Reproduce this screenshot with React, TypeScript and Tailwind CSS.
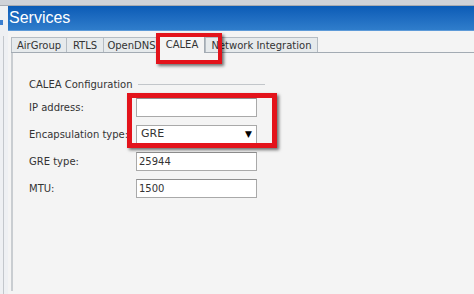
import { type ReactNode } from "react";

const TABS = [
  { label: "AirGroup", w: "w-[56px]" },
  { label: "RTLS", w: "w-[38px]" },
  { label: "OpenDNS", w: "w-[57px]" },
  { label: "CALEA", w: "w-[46px]" },
  { label: "Network Integration", w: "w-[113px]" },
];

export default function App() {
  return (
    <div className="relative flex h-[294px] w-[474px] flex-col overflow-hidden bg-[#e9ecef] font-['DejaVu_Sans',sans-serif] text-[10px] text-[#333]">
      {/* window chrome strip */}
      <div className="h-[6px] shrink-0 border-b border-[#a7abb2] bg-[#cfd2d8]" />

      <div className="flex min-h-0 flex-1">
        {/* left rail */}
        <div className="relative w-[8px] shrink-0 bg-[#eef0f3]">
          <div className="mt-[14px] h-[5px] w-[3px] bg-[#3b7fd0]" />
          <div className="absolute bottom-0 left-[3px] top-[30px] w-px bg-[#c3c7cc]" />
        </div>

        <div className="flex min-w-0 flex-1 flex-col">
          <header className="flex h-[25px] shrink-0 items-center border-b border-[#5d9ad8] bg-gradient-to-b from-[#0a5bb6] to-[#2f7dcb] pl-[1px]">
            <h1 className="font-['Liberation_Sans',Arial,sans-serif] text-[16px] leading-none text-white">
              Services
            </h1>
          </header>

          <div className="flex min-h-0 flex-1 flex-col bg-[#f4f4f4] pb-[3px] pl-[3px] pt-[6px]">
            {/* tab strip */}
            <div className="flex h-[16px] shrink-0 items-end border-b border-[#a3abb3]">
              {TABS.map((t) => {
                const active = t.label === "CALEA";
                return (
                  <div
                    key={t.label}
                    className={[
                      t.w,
                      "flex shrink-0 items-center justify-center whitespace-nowrap border border-b-0",
                      active
                        ? "-mb-px h-[18px] border-[#a3abb3] bg-[#f4f4f4]"
                        : "-mr-px h-[15px] border-[#b5bcc3] bg-[#e6eaec]",
                    ].join(" ")}
                  >
                    {t.label}
                  </div>
                );
              })}
            </div>

            {/* tab body */}
            <div className="flex-1 border-l-2 border-[#c9cdd1] pl-[16px] pt-[24px]">
              <div className="w-[236px]">
                <div className="flex items-center gap-[5px]">
                  <span>CALEA Configuration</span>
                  <div className="h-px flex-1 bg-[#c2c6ca]" />
                </div>

                <div className="mt-[6px] flex flex-col gap-[8px]">
                  <Row label="IP address:">
                    <Field value="" />
                  </Row>
                  <Row label="Encapsulation type:">
                    <div className="flex h-[20px] w-[121px] items-center justify-between border border-[#a9a9a9] bg-white pl-[4px] pr-[4px] text-[11px]">
                      <span>GRE</span>
                      <span className="text-[9px] text-black">▼</span>
                    </div>
                  </Row>
                  <Row label="GRE type:">
                    <Field value="25944" />
                  </Row>
                  <Row label="MTU:">
                    <Field value="1500" />
                  </Row>
                </div>
              </div>
            </div>
          </div>
        </div>
      </div>

      {/* annotation boxes */}
      <div className="absolute left-[156px] top-[33px] h-[31px] w-[66px] border-[4px] border-[#e3131b] shadow-[2px_2px_3px_rgba(0,0,0,0.55)]" />
      <div className="absolute left-[127px] top-[93px] h-[55px] w-[150px] border-[5px] border-[#e3131b] shadow-[2px_2px_3px_rgba(0,0,0,0.55)]" />
    </div>
  );
}

function Row({ label, children }: { label: string; children: ReactNode }) {
  return (
    <div className="flex h-[19px] items-center">
      <span className="w-[107px] shrink-0">{label}</span>
      {children}
    </div>
  );
}

function Field({ value }: { value: string }) {
  return (
    <div className="flex h-[19px] w-[121px] items-center border border-[#a9a9a9] border-t-[#8f8f8f] bg-white pl-[2px]">
      {value}
    </div>
  );
}
